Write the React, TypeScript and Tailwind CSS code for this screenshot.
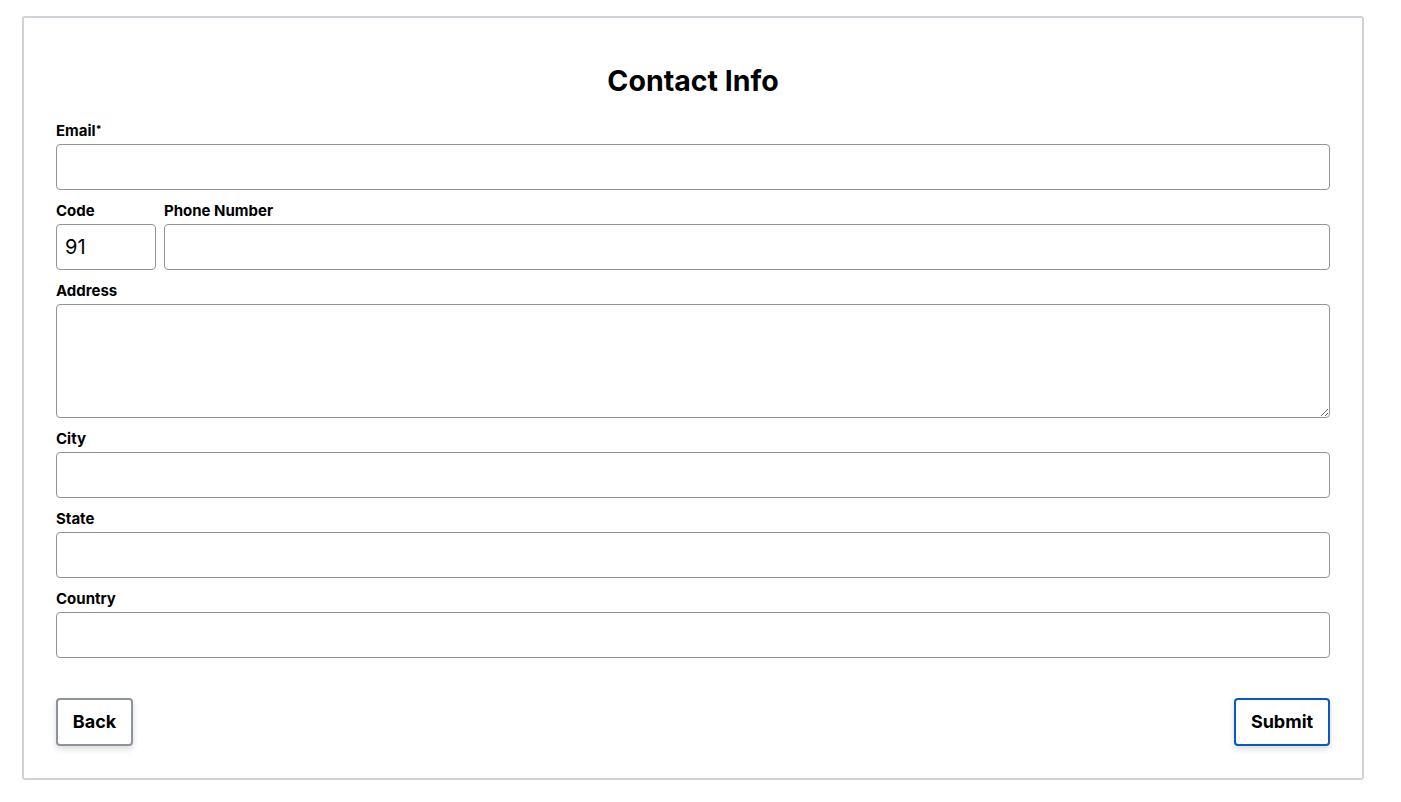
import React from "react";

function Label({ children }: { children: React.ReactNode }) {
  return (
    <label className="block text-[15px] leading-5 font-bold text-black mb-[3px]">{children}</label>
  );
}

function Input({ value }: { value?: string }) {
  return (
    <input
      defaultValue={value}
      className="block w-full h-[46px] border border-[#8e939c] rounded-[4px] px-2 text-[20px] text-black bg-white outline-none"
      style={{ fontFamily: "Inter, 'Liberation Sans', sans-serif" }}
    />
  );
}

export default function App() {
  return (
    <div className="min-h-[802px] bg-white pt-4 pl-[22px] pr-[37px]" style={{ fontFamily: "Inter, 'Liberation Sans', sans-serif" }}>
      <div className="w-[1342px] border-2 border-[#cfd2d7] rounded-[3px] px-8 pt-8 pb-8">
        <h1 className="text-[28.5px] leading-[30px] font-bold text-center text-black mt-4 mb-[25px]">Contact Info</h1>
        <div className="flex flex-col gap-[11px]">
          <div>
            <Label>
              Email<sup className="text-[10px] font-extrabold relative top-[-3px]">*</sup>
            </Label>
            <Input />
          </div>
          <div className="flex gap-2">
            <div className="w-[100px] shrink-0">
              <Label>Code</Label>
              <Input value="91" />
            </div>
            <div className="flex-1">
              <Label>Phone Number</Label>
              <Input />
            </div>
          </div>
          <div>
            <Label>Address</Label>
            <textarea className="block w-full h-[114px] border border-[#8e939c] rounded-[4px] px-2 py-1 text-[16px] bg-white outline-none" />
          </div>
          <div>
            <Label>City</Label>
            <Input />
          </div>
          <div>
            <Label>State</Label>
            <Input />
          </div>
          <div>
            <Label>Country</Label>
            <Input />
          </div>
        </div>
        <div className="flex justify-between mt-10">
          <button className="h-12 w-[77px] border-2 border-[#8c939f] rounded-[4px] text-[18px] font-bold text-black bg-white pb-[2px] shadow-[0_3px_6px_rgba(0,0,0,0.15)]">
            Back
          </button>
          <button className="h-12 w-[96px] border-2 border-[#0b57c4] rounded-[4px] text-[18px] font-bold text-black bg-white pb-[2px] shadow-[0_3px_6px_rgba(0,0,0,0.15)]">
            Submit
          </button>
        </div>
      </div>
    </div>
  );
}
